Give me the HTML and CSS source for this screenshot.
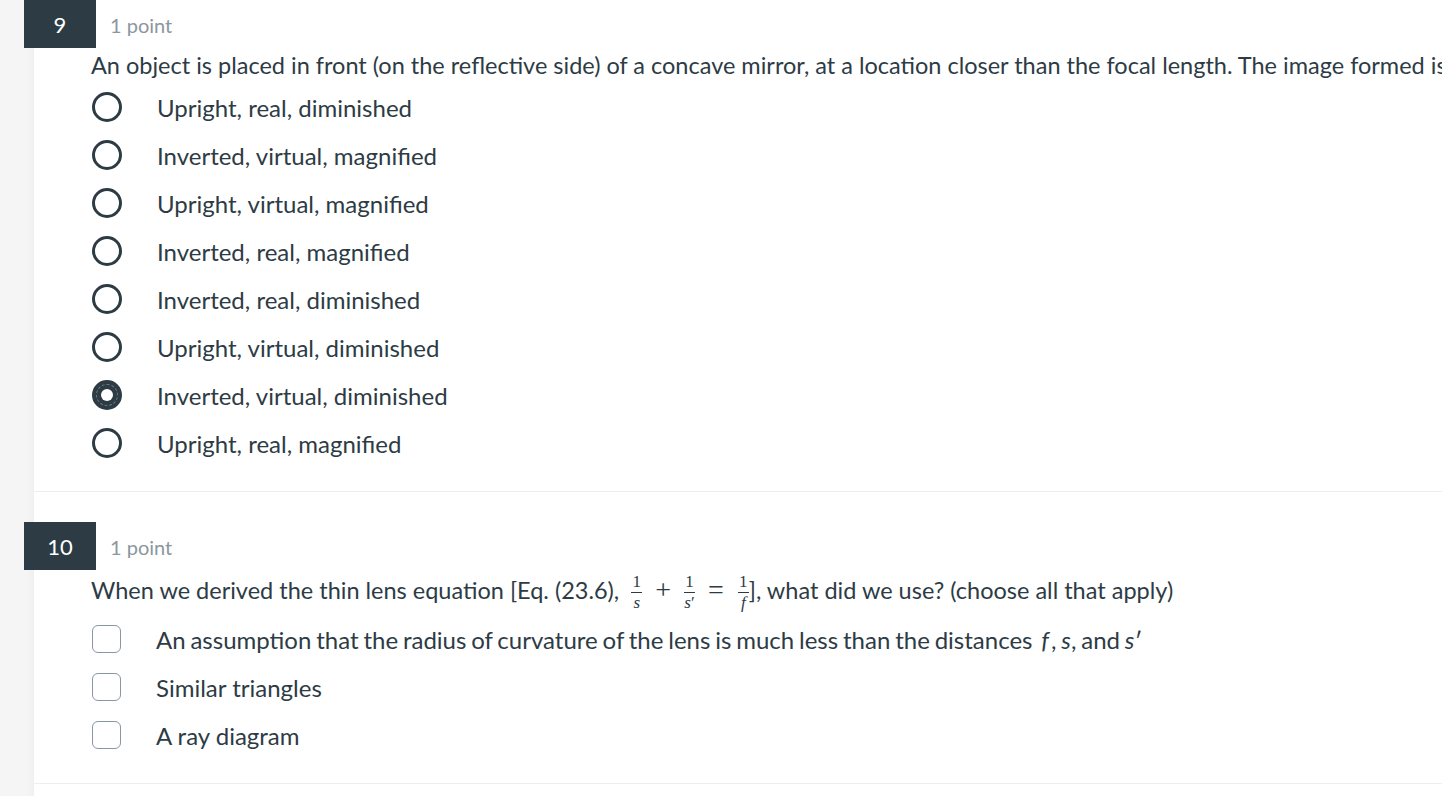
FILE: index.html
```
<!DOCTYPE html>
<html>
<head>
<meta charset="utf-8">
<link rel="stylesheet" href="styles.css">
</head>
<body>
<div class="page">
  <div class="gutter"></div>
  <div class="card">
    <section class="question">
      <div class="qhead">
        <div class="badge">9</div>
        <div class="points">1 point</div>
      </div>
      <div class="qtext">An object is placed in front (on the reflective side) of a concave mirror, at a location closer than the focal length. The image formed is</div>
      <ul class="options">
        <li class="opt"><span class="radio"></span><span class="label">Upright, real, diminished</span></li>
        <li class="opt"><span class="radio"></span><span class="label">Inverted, virtual, magnified</span></li>
        <li class="opt"><span class="radio"></span><span class="label">Upright, virtual, magnified</span></li>
        <li class="opt"><span class="radio"></span><span class="label">Inverted, real, magnified</span></li>
        <li class="opt"><span class="radio"></span><span class="label">Inverted, real, diminished</span></li>
        <li class="opt"><span class="radio"></span><span class="label">Upright, virtual, diminished</span></li>
        <li class="opt"><span class="radio checked"></span><span class="label">Inverted, virtual, diminished</span></li>
        <li class="opt"><span class="radio"></span><span class="label">Upright, real, magnified</span></li>
      </ul>
    </section>
    <section class="question q10">
      <div class="qhead">
        <div class="badge">10</div>
        <div class="points">1 point</div>
      </div>
      <div class="qtext math-line">When we derived the thin lens equation [Eq. (23.6),<span class="math"><span class="frac"><span class="num">1</span><span class="den"><i>s</i></span></span><span class="op">+</span><span class="frac"><span class="num">1</span><span class="den"><i>s</i>′</span></span><span class="op eq">=</span><span class="frac"><span class="num">1</span><span class="den"><i>f</i></span></span></span>], what did we use? (choose all that apply)</div>
      <ul class="options">
        <li class="opt"><span class="check"></span><span class="label tight">An assumption that the radius of curvature of the lens is much less than the distances <i class="mi">f</i>, <i>s</i>, and <i>s</i>′</span></li>
        <li class="opt"><span class="check"></span><span class="label">Similar triangles</span></li>
        <li class="opt"><span class="check"></span><span class="label">A ray diagram</span></li>
      </ul>
    </section>
  </div>
</div>
</body>
</html>
```
FILE: styles.css
```
html, body {
  margin: 0;
  padding: 0;
  overflow: hidden;
  background: #f5f5f5;
}
body {
  font-family: Lato, "Noto Sans", sans-serif;
  color: #2d3b45;
}
.page {
  display: flex;
  width: 1442px;
  height: 796px;
  overflow: hidden;
}
.gutter {
  width: 34px;
  flex: none;
  background: linear-gradient(to right, #f5f5f5 0, #f5f5f5 27px, #f0f0f0 34px);
}
.card {
  flex: none;
  width: 1600px;
  background: #fff;
}
.question {
  padding-bottom: 24px;
  border-bottom: 1px solid #eeeeee;
}
.q10 {
  margin-top: 30px;
}
.qhead {
  display: flex;
  align-items: center;
  height: 48px;
  margin-left: -10px;
}
.badge {
  width: 72px;
  height: 48px;
  background: #2d3b45;
  color: #fff;
  font-size: 22px;
  display: flex;
  align-items: center;
  justify-content: center;
}
.points {
  margin-left: 14px;
  font-size: 20px;
  color: #8b969e;
  padding-top: 1px;
}
.qtext {
  margin-left: 57px;
  margin-top: 3px;
  font-size: 23.5px;
  line-height: 28px;
  white-space: nowrap;
}
.math-line {
  display: flex;
  align-items: center;
  height: 44px;
  margin-top: -2px;
}
.math {
  display: inline-flex;
  align-items: center;
  font-family: "Liberation Serif", "DejaVu Serif", serif;
  margin-left: 12px;
  margin-right: 0;
  padding-top: 4px;
}
.frac {
  display: inline-flex;
  flex-direction: column;
  align-items: center;
  font-size: 17px;
  line-height: 17px;
}
.frac .num {
  border-bottom: 1px solid #2d3b45;
  padding: 0 1px 2px;
  min-width: 9px;
  text-align: center;
}
.frac .den {
  padding-top: 1px;
}
.op {
  font-size: 28px;
  margin: 0 13px 4px 13px;
  line-height: 1;
}
.op.eq {
  margin: 0 14px 4px 13px;
}
.options {
  list-style: none;
  margin: 4px 0 0;
  padding: 0;
}
.q10 .options {
  margin-top: 3px;
}
.opt {
  display: flex;
  align-items: center;
  height: 48px;
  margin-left: 58px;
  font-size: 24px;
}
.radio {
  width: 24px;
  height: 24px;
  border: 3px solid #2d3b45;
  border-radius: 50%;
  flex: none;
  position: relative;
}
.radio.checked {
  background: #2d3b45;
}
.radio.checked::before {
  content: "";
  position: absolute;
  left: 1px;
  top: 1px;
  width: 22px;
  height: 22px;
  border: 1px dashed rgba(255,255,255,0.3);
  border-radius: 50%;
  box-sizing: border-box;
}
.radio.checked::after {
  content: "";
  position: absolute;
  left: 6px;
  top: 6px;
  width: 12px;
  height: 12px;
  border-radius: 50%;
  background: #fff;
}
.check {
  width: 27px;
  height: 26px;
  border: 1.5px solid #8b969e;
  border-radius: 6px;
  flex: none;
}
.label {
  margin-left: 35px;
  white-space: nowrap;
}
.label.tight {
  word-spacing: -1.3px;
}
.label i {
  font-style: italic;
}
.label i.mi {
  margin: 0 2px 0 4px;
}
```
